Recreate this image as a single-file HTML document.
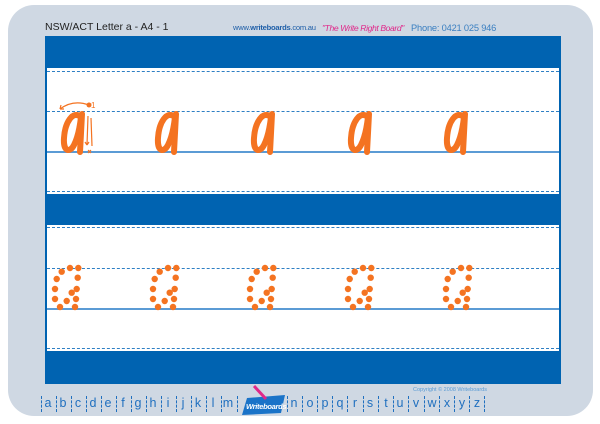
<!DOCTYPE html>
<html><head><style>
body{margin:0;width:600px;height:424px;background:#fff;position:relative;overflow:hidden;font-family:"Liberation Sans",sans-serif}
.card{position:absolute;left:8px;top:5px;width:585px;height:411px;background:#cfd8e3;border-radius:26px}
.abs{position:absolute}
.blue{background:#0063b1}
.row{position:absolute;left:47px;width:512px;background:#fff}
.dash{position:absolute;left:0;width:100%;border-top:1.3px dashed #2e7fc4}
.solid{position:absolute;left:0;width:100%;border-top:2px solid #5b9bd5}
.lt{position:absolute;top:396px;font-size:12.5px;color:#1f6fbf;width:14px;text-align:center}
.sep{position:absolute;top:396px;height:16px;border-left:1px dashed #1f6fbf}
</style></head><body>
<div class="card"></div>
<div class="abs" style="left:45px;top:21px;font-size:10.5px;color:#222">NSW/ACT Letter a - A4 - 1</div>
<div class="abs" style="left:233px;top:23px;font-size:7.6px;color:#1f5fa8;letter-spacing:-0.25px;white-space:nowrap">www.<b>writeboards</b>.com.au</div>
<div class="abs" style="left:322px;top:23px;font-size:8.6px;color:#e0288a;font-style:italic;letter-spacing:-0.4px;white-space:nowrap">"The Write Right Board"</div>
<div class="abs" style="left:411px;top:23px;font-size:9.3px;color:#3a7fc1;letter-spacing:-0.2px;white-space:nowrap">Phone: 0421 025 946</div>
<div class="abs blue" style="left:45px;top:36px;width:516px;height:348px"></div>
<div class="row" style="top:68px;height:126px">
 <div class="dash" style="top:3px"></div><div class="dash" style="top:43px"></div>
 <div class="solid" style="top:83px"></div><div class="dash" style="top:123px"></div>
</div>
<div class="row" style="top:225px;height:126px">
 <div class="dash" style="top:2px"></div><div class="dash" style="top:43px"></div>
 <div class="solid" style="top:83px"></div><div class="dash" style="top:123px"></div>
</div>
<svg class="abs" style="left:0;top:0" width="600" height="424">
<defs>
<g id="A" fill="none" stroke="#f47321" stroke-width="6" stroke-linecap="round">
<path d="M20,5 C12,-2 4,10 3,26 C2,40 9,41 13,33 C17,25 19,14 20,5"/>
<path d="M21,2 L19,40"/>
</g>
<g id="D" fill="#f47321">
<circle cx="61.7" cy="271.7" r="3.2"/><circle cx="70" cy="268" r="3.2"/><circle cx="78.3" cy="268" r="3.2"/>
<circle cx="77.7" cy="277.7" r="3.2"/><circle cx="56.7" cy="279" r="3.2"/><circle cx="55" cy="289" r="3.2"/>
<circle cx="71.7" cy="292.7" r="3.2"/><circle cx="76.7" cy="289" r="3.2"/><circle cx="55" cy="299" r="3.2"/>
<circle cx="66.7" cy="301" r="3.2"/><circle cx="76" cy="299" r="3.2"/><circle cx="60" cy="307" r="3.2"/>
<circle cx="75" cy="307" r="3.2"/>
</g>
</defs>
<use href="#A" x="61" y="112"/><use href="#A" x="155" y="112"/><use href="#A" x="251" y="112"/><use href="#A" x="348" y="112"/><use href="#A" x="444" y="112"/>
<g fill="none" stroke="#f47321" stroke-width="1.2">
<path d="M89,105 C78,101 68,103 60,109"/><path d="M60,109 l1,-4 M60,109 l4,0"/>
<path d="M88,116 L87,145 M87,145 l-2,-3 M87,145 l2,-3"/><path d="M91,118 L92,146"/>
<path d="M88,150 l3,3 M91,150 l-3,3"/>
</g>
<circle cx="89" cy="105" r="2.5" fill="#f47321"/>
<text x="91" y="108" font-size="8" fill="#f47321" font-family="Liberation Sans">1</text>
<use href="#D" x="0"/><use href="#D" x="98"/><use href="#D" x="195"/><use href="#D" x="293"/><use href="#D" x="391"/>
<path d="M247,398 L285,395 L281,413 L242,415 Z" fill="#1a73c8"/>
<text x="246" y="409" font-size="7.5" font-style="italic" font-weight="bold" fill="#fff" font-family="Liberation Sans" letter-spacing="-0.3">Writeboards</text>
<path d="M254,386 L266,399" stroke="#e0288a" stroke-width="3"/>
<text x="413" y="391" font-size="5.5" fill="#5a9bd4" font-family="Liberation Sans">Copyright © 2008 Writeboards</text>
</svg>
<div class="lt" style="left:41px">a</div><div class="lt" style="left:56px">b</div><div class="lt" style="left:71px">c</div><div class="lt" style="left:86px">d</div><div class="lt" style="left:101px">e</div><div class="lt" style="left:116px">f</div><div class="lt" style="left:131px">g</div><div class="lt" style="left:146px">h</div><div class="lt" style="left:161px">i</div><div class="lt" style="left:176px">j</div><div class="lt" style="left:191px">k</div><div class="lt" style="left:206px">l</div><div class="lt" style="left:221px">m</div>
<div class="lt" style="left:287px">n</div><div class="lt" style="left:303px">o</div><div class="lt" style="left:318px">p</div><div class="lt" style="left:333px">q</div><div class="lt" style="left:348px">r</div><div class="lt" style="left:363px">s</div><div class="lt" style="left:379px">t</div><div class="lt" style="left:393px">u</div><div class="lt" style="left:409px">v</div><div class="lt" style="left:425px">w</div><div class="lt" style="left:440px">x</div><div class="lt" style="left:455px">y</div><div class="lt" style="left:470px">z</div>
<div class="sep" style="left:41px"></div><div class="sep" style="left:56px"></div><div class="sep" style="left:71px"></div><div class="sep" style="left:86px"></div><div class="sep" style="left:101px"></div><div class="sep" style="left:116px"></div><div class="sep" style="left:131px"></div><div class="sep" style="left:146px"></div><div class="sep" style="left:161px"></div><div class="sep" style="left:176px"></div><div class="sep" style="left:191px"></div><div class="sep" style="left:206px"></div><div class="sep" style="left:221px"></div><div class="sep" style="left:237px"></div>
<div class="sep" style="left:287px"></div><div class="sep" style="left:302px"></div><div class="sep" style="left:317px"></div><div class="sep" style="left:332px"></div><div class="sep" style="left:347px"></div><div class="sep" style="left:363px"></div><div class="sep" style="left:378px"></div><div class="sep" style="left:393px"></div><div class="sep" style="left:408px"></div><div class="sep" style="left:424px"></div><div class="sep" style="left:439px"></div><div class="sep" style="left:454px"></div><div class="sep" style="left:469px"></div><div class="sep" style="left:484px"></div>
</body></html>
